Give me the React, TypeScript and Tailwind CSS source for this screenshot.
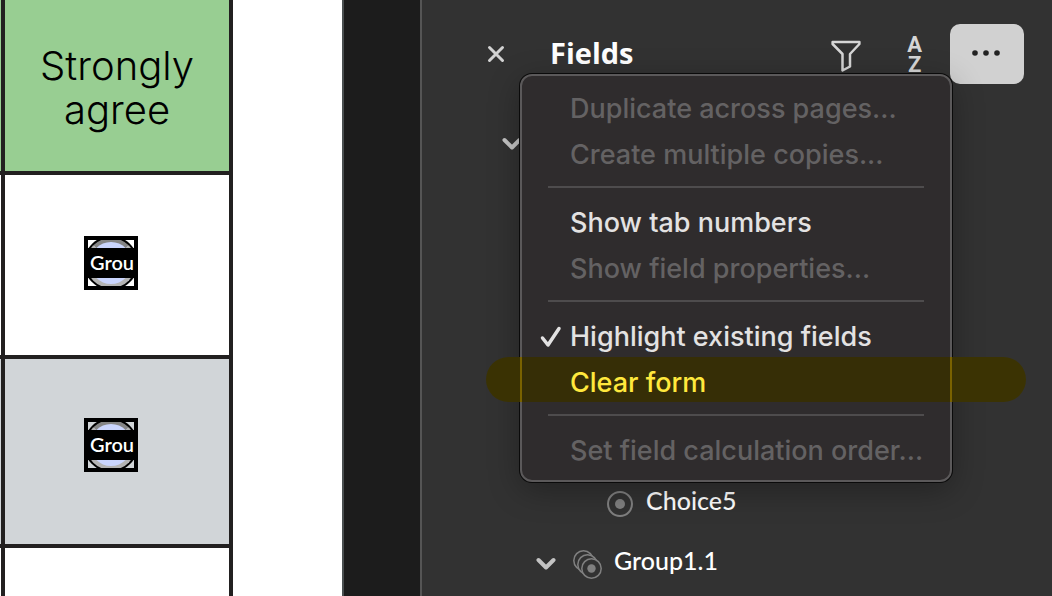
import type { ReactNode } from "react"
import clsx from "clsx"

interface MenuItemProps {
  children: ReactNode
  disabled?: boolean
  checked?: boolean
  highlighted?: boolean
}

function ChevronIcon() {
  return (
    <svg width="20" height="14" viewBox="0 0 20 14" fill="none" stroke="#c4c4c4" strokeWidth="4" strokeLinecap="round" strokeLinejoin="round">
      <path d="M2.5 3 10 10.5 17.5 3" />
    </svg>
  )
}

function RadioIcon() {
  return (
    <svg width="26" height="26" viewBox="0 0 26 26" fill="none" stroke="#808080">
      <circle cx="13" cy="13" r="12" strokeWidth="2" />
      <circle cx="13" cy="13" r="5" fill="#808080" stroke="none" />
    </svg>
  )
}

function RadioGroupIcon() {
  return (
    <svg width="29" height="29" viewBox="0 0 29 29" fill="#323232" stroke="#808080" strokeWidth="1.5">
      <circle cx="10.500" cy="10.500" r="9.700" />
      <circle cx="14.500" cy="14.500" r="9.700" />
      <circle cx="18.500" cy="18.500" r="9.700" />
      <circle cx="18.500" cy="18.500" r="4.200" fill="#808080" stroke="none" />
    </svg>
  )
}

function RadioField({ id }: { id: string }) {
  return (
    <label htmlFor={id} className="relative block size-[54px] overflow-hidden border-4 border-black">
      <input
        id={id}
        type="radio"
        name={id}
        className="absolute -top-0.5 -left-0.5 size-[50px] appearance-none rounded-full border-4 border-[#b4b4b4] border-t-[#858585] bg-[#cad5fd] shadow-[0_0_0_2px_#000]"
      />
      <span className="absolute inset-x-0 top-2 h-[30px] bg-black pl-0.5 font-['Lato',sans-serif] text-xl leading-7 font-semibold text-white">
        Grou
      </span>
    </label>
  )
}

function MenuItem({ children, disabled, checked, highlighted }: MenuItemProps) {
  return (
    <button
      type="button"
      role={checked ? "menuitemcheckbox" : "menuitem"}
      aria-checked={checked}
      disabled={disabled}
      className={clsx(
        "relative flex h-[46px] w-full items-center pt-1 pl-12 text-left whitespace-nowrap",
        disabled ? "text-[#646263]" : highlighted ? "text-[#ffe83d]" : "text-[#e3e2e2]",
      )}
    >
      {highlighted && (
        <span className="absolute -top-px -right-[76px] -left-9 h-[45px] rounded-full bg-[linear-gradient(90deg,#3a3203_34px,#7a6200_34px_36px,#362e06_36px_calc(100%-76px),#7a6200_calc(100%-76px)_calc(100%-74px),#3b3303_calc(100%-74px))]" />
      )}
      {checked && (
        <svg className="absolute left-[18px]" width="22" height="22" viewBox="0 0 22 22" fill="none" stroke="currentColor" strokeWidth="3.500" strokeLinecap="round" strokeLinejoin="round">
          <path d="M2.500 12 8 19 19 2.500" />
        </svg>
      )}
      <span className="relative">{children}</span>
    </button>
  )
}

function MenuDivider() {
  return <div role="separator" className="mx-[26px] my-2.5 h-0.5 bg-[#4e4c4d]" />
}

function OptionsMenu() {
  return (
    <div
      role="menu"
      className="absolute top-[50px] -right-0.5 z-10 w-[432px] rounded-xl border-2 border-[#5b595a] bg-[#2f2c2d] py-2 font-['Inter',sans-serif] text-[27px] font-medium shadow-[0_0_0_1px_#0a0a0a,0_8px_32px_rgba(0,0,0,0.3)]"
    >
      <MenuItem disabled>Duplicate across pages...</MenuItem>
      <MenuItem disabled>Create multiple copies...</MenuItem>
      <MenuDivider />
      <MenuItem>Show tab numbers</MenuItem>
      <MenuItem disabled>Show field properties...</MenuItem>
      <MenuDivider />
      <MenuItem checked>Highlight existing fields</MenuItem>
      <MenuItem highlighted>Clear form</MenuItem>
      <MenuDivider />
      <MenuItem disabled>Set field calculation order...</MenuItem>
    </div>
  )
}

function FormPage() {
  return (
    <main className="w-[342px] shrink-0 bg-white">
      <table className="h-full w-[233px] table-fixed border-separate border-spacing-0">
        <colgroup>
          <col className="w-[5px]" />
          <col />
        </colgroup>
        <thead>
          <tr className="h-[175px] bg-[#98ce92]">
            <td className="border-r-4 border-b-4 border-[#222020] p-0" />
            <th scope="col" className="border-r-4 border-b-4 border-[#222020] p-0 pt-1 text-center font-['Inter',sans-serif] text-[40px] leading-11 font-light text-black">
              Strongly
              <br />
              agree
            </th>
          </tr>
        </thead>
        <tbody>
          <tr className="h-[184px]">
            <td className="border-r-4 border-b-4 border-[#222020] p-0" />
            <td className="border-r-4 border-b-4 border-[#222020] pr-3 pb-1">
              <div className="flex justify-center">
                <RadioField id="group1" />
              </div>
            </td>
          </tr>
          <tr className="h-[189px] bg-[#d1d5d8]">
            <td className="border-r-4 border-b-4 border-[#222020] p-0" />
            <td className="border-r-4 border-b-4 border-[#222020] pr-3 pb-3.5">
              <div className="flex justify-center">
                <RadioField id="group2" />
              </div>
            </td>
          </tr>
          <tr>
            <td className="border-r-4 border-[#222020] p-0" />
            <td className="border-r-4 border-[#222020] p-0" />
          </tr>
        </tbody>
      </table>
    </main>
  )
}

function FieldsPanel() {
  return (
    <aside className="min-w-0 flex-1 border-l-2 border-[#555] bg-[#323232] text-white">
      <header className="flex items-start pt-6 pr-7 pl-16">
        <button type="button" aria-label="Close" className="mt-[21px]">
          <svg width="20" height="18" viewBox="0 0 20 18" fill="none" stroke="#d2d2d2" strokeWidth="3" strokeLinecap="round">
            <path d="M3.500 2.500 16.500 15.500M16.500 2.500 3.500 15.500" />
          </svg>
        </button>
        <h1 className="ml-11 flex-1 text-[29px] leading-[58px] font-bold">Fields</h1>
        <button type="button" aria-label="Filter" className="mt-4 mr-[46px]">
          <svg width="30" height="32" viewBox="0 0 30 32" fill="none" stroke="#d6d6d6" strokeWidth="2.500" strokeLinejoin="round">
            <path d="M1.600 2H28.400V4L19 14V26.500L11.500 30.500V14L1.600 4Z" />
          </svg>
        </button>
        <button type="button" aria-label="Sort" className="mt-[11px] mr-7 flex flex-col font-['Roboto',sans-serif] text-[22px] leading-5 font-bold text-[#d6d6d6]">
          <span>A</span>
          <span>Z</span>
        </button>
        <div className="flex">
          <div className="relative">
            <OptionsMenu />
          </div>
          <button type="button" aria-label="More options" className="flex h-[60px] w-[74px] items-center justify-center rounded-[10px] bg-[#d1d1d1] pr-0.5 pb-0.5">
            <svg width="28" height="6" viewBox="0 0 28 6" fill="#222">
              <circle cx="3" cy="3" r="2.800" />
              <circle cx="14" cy="3" r="2.800" />
              <circle cx="25" cy="3" r="2.800" />
            </svg>
          </button>
        </div>
      </header>
      <ul className="pt-[30px] pl-20 font-['Lato',sans-serif] text-[25px] leading-[52px] font-medium">
        <li className="mb-[300px] flex h-[60px] items-center">
          <button type="button" aria-label="Collapse page">
            <ChevronIcon />
          </button>
        </li>
        <li className="flex h-[60px] items-center gap-[13px] pl-[105px]">
          <RadioIcon />
          <span className="self-start">Choice5</span>
        </li>
        <li className="flex h-[60px] items-center pl-[34px]">
          <button type="button" aria-label="Collapse group">
            <ChevronIcon />
          </button>
          <span className="ml-[17px]">
            <RadioGroupIcon />
          </span>
          <span className="ml-3 self-start">Group1.1</span>
        </li>
      </ul>
    </aside>
  )
}

export default function App() {
  return (
    <div className="flex h-screen overflow-hidden font-['Open_Sans','Noto_Sans',sans-serif]">
      <FormPage />
      <div className="w-[78px] shrink-0 border-l-2 border-[#4a4f50] bg-[#1c1c1c]" />
      <FieldsPanel />
    </div>
  )
}
